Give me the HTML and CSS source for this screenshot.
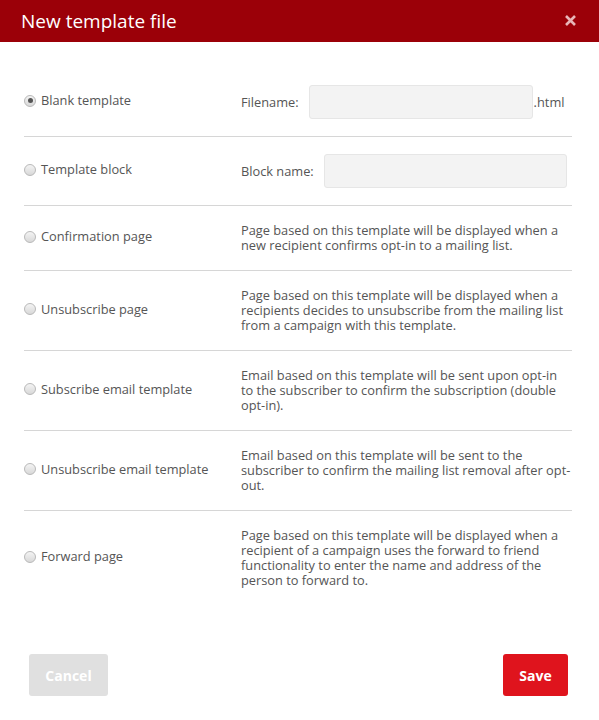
FILE: index.html
```html
<!DOCTYPE html>
<html>
<head>
<meta charset="utf-8">
<link rel="stylesheet" href="styles.css">
</head>
<body>
<div class="modal">
  <div class="modal-header">
    <h1 class="modal-title">New template file</h1>
    <svg class="close" width="13" height="13" viewBox="0 0 13 13" aria-label="Close">
      <path d="M2 2 L11 11 M11 2 L2 11" stroke="#e8b5b8" stroke-width="2.6" stroke-linecap="butt" fill="none"/>
    </svg>
  </div>
  <div class="modal-body">
    <div class="row row-input">
      <label class="opt"><span class="radio checked"></span>Blank template</label>
      <div class="field">
        <span class="field-label">Filename:</span>
        <span class="input input-file"></span>
        <span class="suffix">.html</span>
      </div>
    </div>
    <div class="row row-input">
      <label class="opt"><span class="radio"></span>Template block</label>
      <div class="field">
        <span class="field-label">Block name:</span>
        <span class="input input-block"></span>
      </div>
    </div>
    <div class="row">
      <label class="opt"><span class="radio"></span>Confirmation page</label>
      <p class="desc">Page based on this template will be displayed when a new recipient confirms opt-in to a mailing list.</p>
    </div>
    <div class="row">
      <label class="opt"><span class="radio"></span>Unsubscribe page</label>
      <p class="desc">Page based on this template will be displayed when a recipients decides to unsubscribe from the mailing list from a campaign with this template.</p>
    </div>
    <div class="row">
      <label class="opt"><span class="radio"></span>Subscribe email template</label>
      <p class="desc">Email based on this template will be sent upon opt-in to the subscriber to confirm the subscription (double opt-in).</p>
    </div>
    <div class="row">
      <label class="opt"><span class="radio"></span>Unsubscribe email template</label>
      <p class="desc">Email based on this template will be sent to the subscriber to confirm the mailing list removal after opt-out.</p>
    </div>
    <div class="row last">
      <label class="opt"><span class="radio"></span>Forward page</label>
      <p class="desc">Page based on this template will be displayed when a recipient of a campaign uses the forward to friend functionality to enter the name and address of the person to forward to.</p>
    </div>
  </div>
  <div class="modal-footer">
    <button class="btn btn-cancel">Cancel</button>
    <button class="btn btn-save">Save</button>
  </div>
</div>
</body>
</html>
```
FILE: styles.css
```css
html, body {
  margin: 0;
  padding: 0;
  background: #ffffff;
}
body {
  font-family: "Open Sans", "Liberation Sans", sans-serif;
  color: #555555;
  font-size: 12.8px;
}
.modal {
  width: 599px;
  height: 720px;
  display: flex;
  flex-direction: column;
  background: #fff;
}
.modal-header {
  height: 42px;
  background: #9b0008;
  display: flex;
  align-items: center;
  justify-content: space-between;
  padding: 0 22px 0 21px;
  flex-shrink: 0;
}
.modal-title {
  margin: 0;
  color: #ffffff;
  font-size: 19px;
  font-weight: 400;
  line-height: 42px;
}
.close {
  display: block;
  margin-top: -1px;
}
.modal-body {
  padding: 26px 27px 0 24px;
}
.row {
  display: grid;
  grid-template-columns: 217px 1fr;
  align-items: center;
  padding: 17px 0;
  border-bottom: 1px solid #d6d6d6;
}
.row.last {
  border-bottom: none;
}
.opt {
  display: flex;
  align-items: center;
  line-height: 17px;
  margin-bottom: 3px;
}
.radio {
  width: 10px;
  height: 10px;
  border-radius: 50%;
  border: 1px solid #b9b9b9;
  background: linear-gradient(#f4f4f4, #d8d8d8);
  margin-right: 5px;
  position: relative;
  flex-shrink: 0;
}
.radio.checked::after {
  content: "";
  position: absolute;
  left: 2.5px;
  top: 2.5px;
  width: 5px;
  height: 5px;
  border-radius: 50%;
  background: #555;
}
.field {
  display: flex;
  align-items: center;
}
.field-label {
  margin-right: 10px;
}
.input {
  display: block;
  height: 32px;
  border: 1px solid #e6e6e6;
  border-radius: 3px;
  background: #f3f3f3;
  box-sizing: content-box;
}
.input-file {
  width: 222px;
}
.input-block {
  flex: 1;
  margin-right: 5px;
}
.suffix {
  margin-left: 1px;
}
.desc {
  margin: 0;
  line-height: 15px;
}
.modal-footer {
  margin-top: auto;
  display: flex;
  justify-content: space-between;
  padding: 0 31px 24px 29px;
}
.btn {
  height: 42px;
  border: none;
  border-radius: 3px;
  font-family: "Open Sans", "Liberation Sans", sans-serif;
  font-weight: 700;
  font-size: 14px;
  color: #ffffff;
  padding: 0;
}
.btn-cancel {
  background: #e0e0e0;
  width: 79px;
}
.btn-save {
  background: #df141d;
  width: 65px;
}
```
